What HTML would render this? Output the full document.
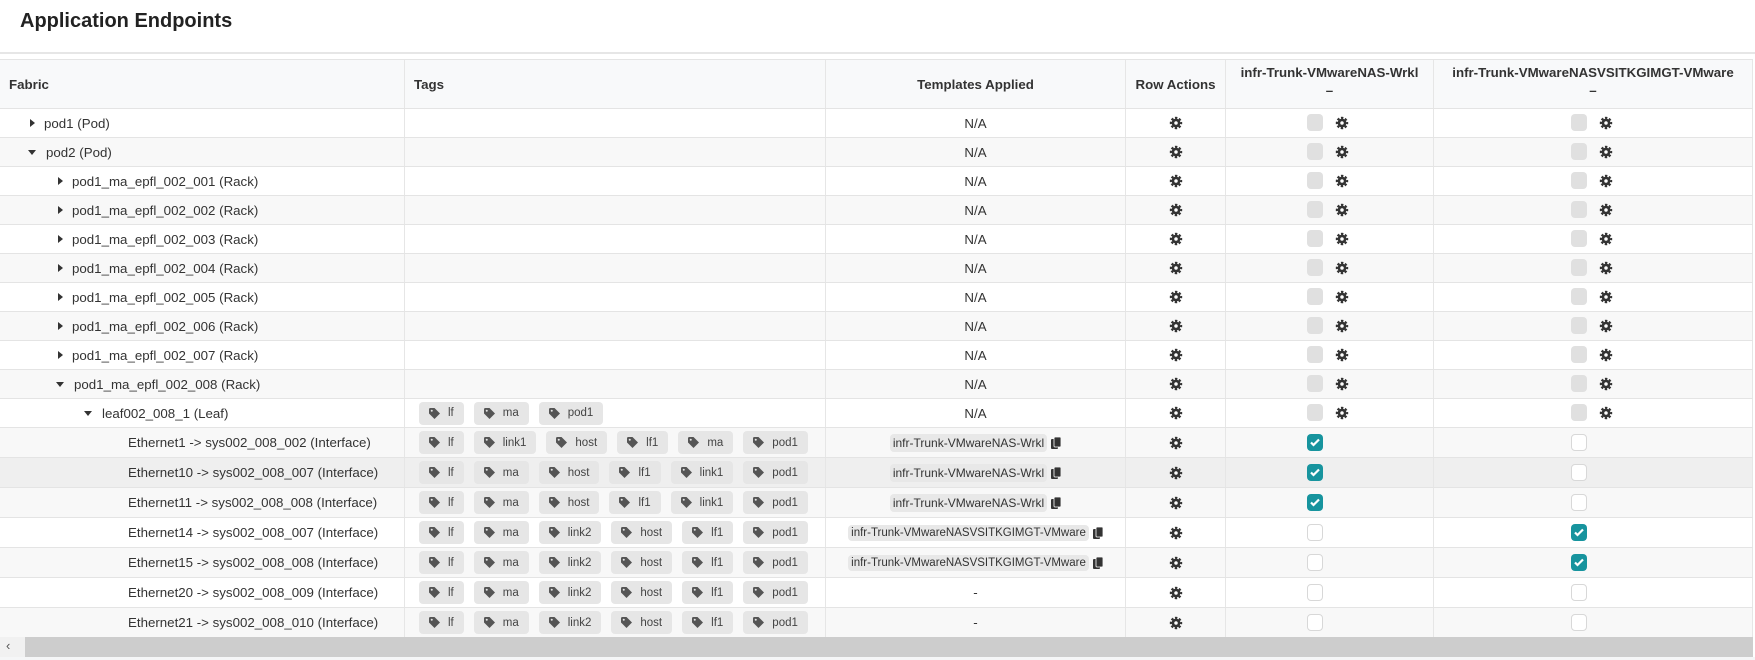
<!DOCTYPE html>
<html><head><meta charset="utf-8"><style>
*{box-sizing:border-box;margin:0;padding:0}
body{width:1755px;height:660px;overflow:hidden;background:#fff;font-family:"Liberation Sans",sans-serif;color:#333;position:relative}
.title{position:absolute;left:20px;top:10px;font-size:20px;font-weight:bold;color:#222}
.hl{position:absolute;left:0;top:52px;width:1755px;height:2px;background:#e6e6e6}
.grid{position:absolute;left:0;top:59px;width:1753px}
.row{display:grid;grid-template-columns:405px 421px 300px 100px 208px 319px;border-bottom:1px solid #e4e4e4;height:29px}
.row>div{border-right:1px solid #e6e6e6;position:relative;display:flex;align-items:center;font-size:13.3px;white-space:nowrap}
.row.h30{height:30px}
.hdr{height:50px;background:#f8f9fa;border-top:1px solid #e4e4e4}
.hdr>div{font-weight:bold;font-size:13.3px;color:#333}
.c{justify-content:center}
.odd{background:#f8f8f8}
.hov{background:#efefef}
.arr{display:inline-block;width:0;height:0;margin-right:10px}
.ar{border-left:5px solid #333;border-top:4px solid transparent;border-bottom:4px solid transparent;margin-left:2px;margin-right:9px}
.ad{border-top:5px solid #333;border-left:4px solid transparent;border-right:4px solid transparent}
.pill{display:inline-flex;align-items:center;height:23px;background:#e6e6e6;border-radius:4px;padding:0 10px 0 10px;margin-right:10px;font-size:11.5px;color:#444}
.pill svg{margin-right:8px}
.tags{padding-left:14px}
.tp{display:inline-block;background:#e8e8e8;border-radius:4px;padding:2px 3px;font-size:12px;color:#333}
.cp{margin-left:4px}
.cb{position:absolute;width:16px;height:17px;border-radius:4px;top:50%;margin-top:-9px}
.dis{background:#e0e0e0}
.un{background:#fff;border:1px solid #d8d8d8}
.ck{background:#17949e}
.g5{position:absolute;left:109px;top:50%;margin-top:-7px}
.g6{position:absolute;left:165px;top:50%;margin-top:-7px}
.scroll{position:absolute;left:0;top:637px;width:1753px;height:20px;background:#f1f1f1}
.thumb{position:absolute;left:25px;top:0;width:1728px;height:20px;background:#cdcdcd}
.bot{position:absolute;left:0;top:657px;width:1755px;height:3px;background:#f5f6f7}
</style></head><body>
<svg width="0" height="0" style="position:absolute">
<defs>
<symbol id="g" viewBox="0 0 16 16"><circle cx="8" cy="8" r="5.6" fill="none" stroke="#333" stroke-width="3" stroke-dasharray="2.6 1.8" stroke-dashoffset="1.3"/><circle cx="8" cy="8" r="5" fill="#333"/><circle cx="8" cy="8" r="2" fill="#fff"/></symbol>
<symbol id="t" viewBox="0 0 12 12"><path d="M0 1.5Q0 0 1.5 0H6L12 6 6 12 0 6Z" fill="#555"/><circle cx="3" cy="3" r="1.1" fill="#e6e6e6"/></symbol>
<symbol id="c" viewBox="0 0 10 12"><rect x="0" y="2" width="7" height="10" rx="1" fill="#333"/><rect x="3" y="0" width="7" height="10" rx="1" fill="#333" stroke="#fff" stroke-width="0.8"/></symbol>
<symbol id="k" viewBox="0 0 16 16"><path d="M4 8.5l2.5 2.5L12 5.5" fill="none" stroke="#fff" stroke-width="2.2"/></symbol>
</defs></svg>
<div class="title">Application Endpoints</div>
<div class="hl"></div>
<div class="grid">
<div class="row hdr"><div style="padding-left:9px">Fabric</div><div style="padding-left:9px">Tags</div><div class="c">Templates Applied</div><div class="c">Row Actions</div><div class="c" style="flex-direction:column;line-height:18px;padding-bottom:4px">infr-Trunk-VMwareNAS-Wrkl<span>–</span></div><div class="c" style="flex-direction:column;line-height:18px;padding-bottom:4px">infr-Trunk-VMwareNASVSITKGIMGT-VMware<span>–</span></div></div>

<div class="row"><div style="padding-left:28px"><span class="arr ar"></span>pod1 (Pod)</div><div></div><div class="c">N/A</div><div class="c"><svg width="14" height="14"><use href="#g"/></svg></div><div><span class="cb dis" style="left:81px"></span><svg class="g5" width="14" height="14"><use href="#g"/></svg></div><div><span class="cb dis" style="left:137px"></span><svg class="g6" width="14" height="14"><use href="#g"/></svg></div></div>
<div class="row odd"><div style="padding-left:28px"><span class="arr ad"></span>pod2 (Pod)</div><div></div><div class="c">N/A</div><div class="c"><svg width="14" height="14"><use href="#g"/></svg></div><div><span class="cb dis" style="left:81px"></span><svg class="g5" width="14" height="14"><use href="#g"/></svg></div><div><span class="cb dis" style="left:137px"></span><svg class="g6" width="14" height="14"><use href="#g"/></svg></div></div>
<div class="row"><div style="padding-left:56px"><span class="arr ar"></span>pod1_ma_epfl_002_001 (Rack)</div><div></div><div class="c">N/A</div><div class="c"><svg width="14" height="14"><use href="#g"/></svg></div><div><span class="cb dis" style="left:81px"></span><svg class="g5" width="14" height="14"><use href="#g"/></svg></div><div><span class="cb dis" style="left:137px"></span><svg class="g6" width="14" height="14"><use href="#g"/></svg></div></div>
<div class="row odd"><div style="padding-left:56px"><span class="arr ar"></span>pod1_ma_epfl_002_002 (Rack)</div><div></div><div class="c">N/A</div><div class="c"><svg width="14" height="14"><use href="#g"/></svg></div><div><span class="cb dis" style="left:81px"></span><svg class="g5" width="14" height="14"><use href="#g"/></svg></div><div><span class="cb dis" style="left:137px"></span><svg class="g6" width="14" height="14"><use href="#g"/></svg></div></div>
<div class="row"><div style="padding-left:56px"><span class="arr ar"></span>pod1_ma_epfl_002_003 (Rack)</div><div></div><div class="c">N/A</div><div class="c"><svg width="14" height="14"><use href="#g"/></svg></div><div><span class="cb dis" style="left:81px"></span><svg class="g5" width="14" height="14"><use href="#g"/></svg></div><div><span class="cb dis" style="left:137px"></span><svg class="g6" width="14" height="14"><use href="#g"/></svg></div></div>
<div class="row odd"><div style="padding-left:56px"><span class="arr ar"></span>pod1_ma_epfl_002_004 (Rack)</div><div></div><div class="c">N/A</div><div class="c"><svg width="14" height="14"><use href="#g"/></svg></div><div><span class="cb dis" style="left:81px"></span><svg class="g5" width="14" height="14"><use href="#g"/></svg></div><div><span class="cb dis" style="left:137px"></span><svg class="g6" width="14" height="14"><use href="#g"/></svg></div></div>
<div class="row"><div style="padding-left:56px"><span class="arr ar"></span>pod1_ma_epfl_002_005 (Rack)</div><div></div><div class="c">N/A</div><div class="c"><svg width="14" height="14"><use href="#g"/></svg></div><div><span class="cb dis" style="left:81px"></span><svg class="g5" width="14" height="14"><use href="#g"/></svg></div><div><span class="cb dis" style="left:137px"></span><svg class="g6" width="14" height="14"><use href="#g"/></svg></div></div>
<div class="row odd"><div style="padding-left:56px"><span class="arr ar"></span>pod1_ma_epfl_002_006 (Rack)</div><div></div><div class="c">N/A</div><div class="c"><svg width="14" height="14"><use href="#g"/></svg></div><div><span class="cb dis" style="left:81px"></span><svg class="g5" width="14" height="14"><use href="#g"/></svg></div><div><span class="cb dis" style="left:137px"></span><svg class="g6" width="14" height="14"><use href="#g"/></svg></div></div>
<div class="row"><div style="padding-left:56px"><span class="arr ar"></span>pod1_ma_epfl_002_007 (Rack)</div><div></div><div class="c">N/A</div><div class="c"><svg width="14" height="14"><use href="#g"/></svg></div><div><span class="cb dis" style="left:81px"></span><svg class="g5" width="14" height="14"><use href="#g"/></svg></div><div><span class="cb dis" style="left:137px"></span><svg class="g6" width="14" height="14"><use href="#g"/></svg></div></div>
<div class="row odd"><div style="padding-left:56px"><span class="arr ad"></span>pod1_ma_epfl_002_008 (Rack)</div><div></div><div class="c">N/A</div><div class="c"><svg width="14" height="14"><use href="#g"/></svg></div><div><span class="cb dis" style="left:81px"></span><svg class="g5" width="14" height="14"><use href="#g"/></svg></div><div><span class="cb dis" style="left:137px"></span><svg class="g6" width="14" height="14"><use href="#g"/></svg></div></div>
<div class="row"><div style="padding-left:84px"><span class="arr ad"></span>leaf002_008_1 (Leaf)</div><div class="tags"><span class="pill"><svg width="11" height="11"><use href="#t"/></svg>lf</span><span class="pill"><svg width="11" height="11"><use href="#t"/></svg>ma</span><span class="pill"><svg width="11" height="11"><use href="#t"/></svg>pod1</span></div><div class="c">N/A</div><div class="c"><svg width="14" height="14"><use href="#g"/></svg></div><div><span class="cb dis" style="left:81px"></span><svg class="g5" width="14" height="14"><use href="#g"/></svg></div><div><span class="cb dis" style="left:137px"></span><svg class="g6" width="14" height="14"><use href="#g"/></svg></div></div>

<div class="row odd h30"><div style="padding-left:128px">Ethernet1 -&gt; sys002_008_002 (Interface)</div><div class="tags"><span class="pill"><svg width="11" height="11"><use href="#t"/></svg>lf</span><span class="pill"><svg width="11" height="11"><use href="#t"/></svg>link1</span><span class="pill"><svg width="11" height="11"><use href="#t"/></svg>host</span><span class="pill"><svg width="11" height="11"><use href="#t"/></svg>lf1</span><span class="pill"><svg width="11" height="11"><use href="#t"/></svg>ma</span><span class="pill"><svg width="11" height="11"><use href="#t"/></svg>pod1</span></div><div class="c"><span class="tp">infr-Trunk-VMwareNAS-Wrkl</span><svg class="cp" width="10" height="12"><use href="#c"/></svg></div><div class="c"><svg width="14" height="14"><use href="#g"/></svg></div><div><span class="cb ck" style="left:81px"><svg width="16" height="16"><use href="#k"/></svg></span></div><div><span class="cb un" style="left:137px"></span></div></div>
<div class="row hov h30"><div style="padding-left:128px">Ethernet10 -&gt; sys002_008_007 (Interface)</div><div class="tags"><span class="pill"><svg width="11" height="11"><use href="#t"/></svg>lf</span><span class="pill"><svg width="11" height="11"><use href="#t"/></svg>ma</span><span class="pill"><svg width="11" height="11"><use href="#t"/></svg>host</span><span class="pill"><svg width="11" height="11"><use href="#t"/></svg>lf1</span><span class="pill"><svg width="11" height="11"><use href="#t"/></svg>link1</span><span class="pill"><svg width="11" height="11"><use href="#t"/></svg>pod1</span></div><div class="c"><span class="tp">infr-Trunk-VMwareNAS-Wrkl</span><svg class="cp" width="10" height="12"><use href="#c"/></svg></div><div class="c"><svg width="14" height="14"><use href="#g"/></svg></div><div><span class="cb ck" style="left:81px"><svg width="16" height="16"><use href="#k"/></svg></span></div><div><span class="cb un" style="left:137px"></span></div></div>
<div class="row odd h30"><div style="padding-left:128px">Ethernet11 -&gt; sys002_008_008 (Interface)</div><div class="tags"><span class="pill"><svg width="11" height="11"><use href="#t"/></svg>lf</span><span class="pill"><svg width="11" height="11"><use href="#t"/></svg>ma</span><span class="pill"><svg width="11" height="11"><use href="#t"/></svg>host</span><span class="pill"><svg width="11" height="11"><use href="#t"/></svg>lf1</span><span class="pill"><svg width="11" height="11"><use href="#t"/></svg>link1</span><span class="pill"><svg width="11" height="11"><use href="#t"/></svg>pod1</span></div><div class="c"><span class="tp">infr-Trunk-VMwareNAS-Wrkl</span><svg class="cp" width="10" height="12"><use href="#c"/></svg></div><div class="c"><svg width="14" height="14"><use href="#g"/></svg></div><div><span class="cb ck" style="left:81px"><svg width="16" height="16"><use href="#k"/></svg></span></div><div><span class="cb un" style="left:137px"></span></div></div>
<div class="row h30"><div style="padding-left:128px">Ethernet14 -&gt; sys002_008_007 (Interface)</div><div class="tags"><span class="pill"><svg width="11" height="11"><use href="#t"/></svg>lf</span><span class="pill"><svg width="11" height="11"><use href="#t"/></svg>ma</span><span class="pill"><svg width="11" height="11"><use href="#t"/></svg>link2</span><span class="pill"><svg width="11" height="11"><use href="#t"/></svg>host</span><span class="pill"><svg width="11" height="11"><use href="#t"/></svg>lf1</span><span class="pill"><svg width="11" height="11"><use href="#t"/></svg>pod1</span></div><div class="c"><span class="tp" style="font-size:11.5px">infr-Trunk-VMwareNASVSITKGIMGT-VMware</span><svg class="cp" width="10" height="12"><use href="#c"/></svg></div><div class="c"><svg width="14" height="14"><use href="#g"/></svg></div><div><span class="cb un" style="left:81px"></span></div><div><span class="cb ck" style="left:137px"><svg width="16" height="16"><use href="#k"/></svg></span></div></div>
<div class="row odd h30"><div style="padding-left:128px">Ethernet15 -&gt; sys002_008_008 (Interface)</div><div class="tags"><span class="pill"><svg width="11" height="11"><use href="#t"/></svg>lf</span><span class="pill"><svg width="11" height="11"><use href="#t"/></svg>ma</span><span class="pill"><svg width="11" height="11"><use href="#t"/></svg>link2</span><span class="pill"><svg width="11" height="11"><use href="#t"/></svg>host</span><span class="pill"><svg width="11" height="11"><use href="#t"/></svg>lf1</span><span class="pill"><svg width="11" height="11"><use href="#t"/></svg>pod1</span></div><div class="c"><span class="tp" style="font-size:11.5px">infr-Trunk-VMwareNASVSITKGIMGT-VMware</span><svg class="cp" width="10" height="12"><use href="#c"/></svg></div><div class="c"><svg width="14" height="14"><use href="#g"/></svg></div><div><span class="cb un" style="left:81px"></span></div><div><span class="cb ck" style="left:137px"><svg width="16" height="16"><use href="#k"/></svg></span></div></div>
<div class="row h30"><div style="padding-left:128px">Ethernet20 -&gt; sys002_008_009 (Interface)</div><div class="tags"><span class="pill"><svg width="11" height="11"><use href="#t"/></svg>lf</span><span class="pill"><svg width="11" height="11"><use href="#t"/></svg>ma</span><span class="pill"><svg width="11" height="11"><use href="#t"/></svg>link2</span><span class="pill"><svg width="11" height="11"><use href="#t"/></svg>host</span><span class="pill"><svg width="11" height="11"><use href="#t"/></svg>lf1</span><span class="pill"><svg width="11" height="11"><use href="#t"/></svg>pod1</span></div><div class="c">-</div><div class="c"><svg width="14" height="14"><use href="#g"/></svg></div><div><span class="cb un" style="left:81px"></span></div><div><span class="cb un" style="left:137px"></span></div></div>
<div class="row odd h30"><div style="padding-left:128px">Ethernet21 -&gt; sys002_008_010 (Interface)</div><div class="tags"><span class="pill"><svg width="11" height="11"><use href="#t"/></svg>lf</span><span class="pill"><svg width="11" height="11"><use href="#t"/></svg>ma</span><span class="pill"><svg width="11" height="11"><use href="#t"/></svg>link2</span><span class="pill"><svg width="11" height="11"><use href="#t"/></svg>host</span><span class="pill"><svg width="11" height="11"><use href="#t"/></svg>lf1</span><span class="pill"><svg width="11" height="11"><use href="#t"/></svg>pod1</span></div><div class="c">-</div><div class="c"><svg width="14" height="14"><use href="#g"/></svg></div><div><span class="cb un" style="left:81px"></span></div><div><span class="cb un" style="left:137px"></span></div></div>
</div>
<div class="scroll"><span style="position:absolute;left:6px;top:1px;font-size:13px;color:#555">&lsaquo;</span><div class="thumb"></div></div>
<div class="bot"></div>
</body></html>
